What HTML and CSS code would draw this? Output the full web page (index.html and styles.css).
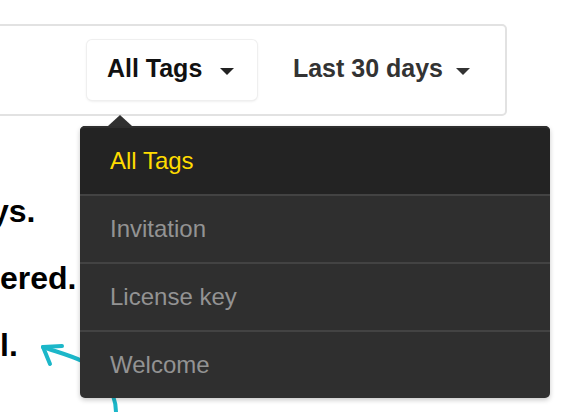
FILE: index.html
```html
<!DOCTYPE html>
<html lang="en">
<head>
<meta charset="utf-8">
<title>Tags filter</title>
<link rel="stylesheet" href="styles.css">
</head>
<body>
<div class="toolbar">
  <div class="filter filter-active">All Tags<span class="caret caret-a"></span></div>
  <div class="filter filter-plain">Last 30 days<span class="caret caret-b"></span></div>
</div>
<div class="copy">
  <p class="line line-1">ys.</p>
  <p class="line line-2">ered.</p>
  <p class="line line-3">l.</p>
</div>
<svg class="annotation" width="564" height="412" viewBox="0 0 564 412" aria-hidden="true">
  <path d="M43 347 C 62 354, 92 360, 104 378 C 112 390, 116 400, 116 412" fill="none" stroke="#1cb7c9" stroke-width="4" stroke-linecap="round"/>
  <path d="M62 346 L43 347 L50 364" fill="none" stroke="#1cb7c9" stroke-width="4" stroke-linecap="round" stroke-linejoin="round"/>
</svg>
<ul class="menu">
  <li class="menu-item menu-item-current">All Tags</li>
  <li class="menu-item">Invitation</li>
  <li class="menu-item">License key</li>
  <li class="menu-item">Welcome</li>
</ul>
</body>
</html>
```
FILE: styles.css
```css
html, body {
  margin: 0;
  padding: 0;
}
body {
  width: 564px;
  height: 412px;
  overflow: hidden;
  background: #fff;
  font-family: "Liberation Sans", Arial, Helvetica, sans-serif;
  position: relative;
}
.toolbar {
  box-sizing: border-box;
  margin-top: 24px;
  margin-left: -10px;
  width: 517px;
  height: 92px;
  border: 2px solid #e2e2e2;
  border-radius: 5px;
  display: flex;
  justify-content: flex-end;
  align-items: stretch;
  padding: 14px 14px 14px 0;
}
.filter {
  display: flex;
  align-items: center;
  font-size: 25px;
  font-weight: bold;
  padding-bottom: 4px;
  box-sizing: border-box;
  height: 60px;
  white-space: nowrap;
}
.filter-active {
  width: 170px;
  padding-left: 20px;
  color: #111;
  background: #fff;
  border-radius: 5px;
  box-shadow: 0 0 0 1px #efefef, 0 1px 3px rgba(0, 0, 0, 0.12);
}
.filter-plain {
  margin-left: 36px;
  padding-right: 21px;
  color: #333;
}
.caret {
  width: 0;
  height: 0;
  border-left: 7px solid transparent;
  border-right: 7px solid transparent;
  border-top: 7px solid currentColor;
  margin-top: 6px;
}
.caret-a {
  margin-left: 18px;
  color: #222;
}
.caret-b {
  margin-left: 13px;
  color: #333;
}
.copy {
  margin-top: 62px;
}
.line {
  margin: 0;
  font-size: 32px;
  font-weight: bold;
  line-height: 67px;
  color: #000;
  white-space: nowrap;
}
.line-1 { text-indent: -9px; }
.line-2 { text-indent: 0; }
.line-3 { text-indent: 0; }
.annotation {
  position: absolute;
  left: 0;
  top: 0;
}
.menu {
  position: absolute;
  left: 80px;
  top: 126px;
  width: 470px;
  margin: 0;
  padding: 0;
  list-style: none;
  background: #2f2f2f;
  border-radius: 5px;
  box-shadow: 0 2px 5px rgba(0, 0, 0, 0.22);
}
.menu::before {
  content: "";
  position: absolute;
  left: 28px;
  top: -11px;
  width: 0;
  height: 0;
  border-left: 12px solid transparent;
  border-right: 12px solid transparent;
  border-bottom: 11px solid #303030;
}
.menu-item {
  box-sizing: border-box;
  height: 68px;
  border-top: 2px solid #434343;
  padding-left: 30px;
  display: flex;
  align-items: center;
  font-size: 24px;
  color: #939393;
}
.menu-item-current {
  border-top: 2px solid #2e2e2e;
  background: #232323;
  color: #ffdc00;
  border-radius: 5px 5px 0 0;
}
```
